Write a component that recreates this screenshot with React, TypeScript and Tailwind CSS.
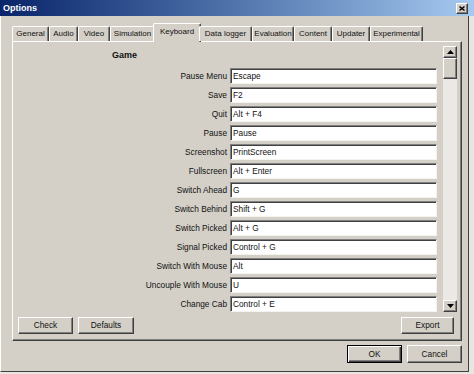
const tabs = [
  { name: "General", w: "w-[37px]" },
  { name: "Audio", w: "w-[29px]" },
  { name: "Video", w: "w-[32px]" },
  { name: "Simulation", w: "w-[45px]" },
  { name: "Keyboard", w: "w-[48px]", active: true },
  { name: "Data logger", w: "w-[53px]" },
  { name: "Evaluation", w: "w-[42px]" },
  { name: "Content", w: "w-[38px]" },
  { name: "Updater", w: "w-[38px]" },
  { name: "Experimental", w: "w-[53px]" },
]

const bindings: [string, string][] = [
  ["Pause Menu", "Escape"],
  ["Save", "F2"],
  ["Quit", "Alt + F4"],
  ["Pause", "Pause"],
  ["Screenshot", "PrintScreen"],
  ["Fullscreen", "Alt + Enter"],
  ["Switch Ahead", "G"],
  ["Switch Behind", "Shift + G"],
  ["Switch Picked", "Alt + G"],
  ["Signal Picked", "Control + G"],
  ["Switch With Mouse", "Alt"],
  ["Uncouple With Mouse", "U"],
  ["Change Cab", "Control + E"],
]

const raised =
  "bg-[#d4d0c8] border border-t-white border-l-white border-r-[#404040] border-b-[#404040] shadow-[inset_-1px_-1px_0_#808080]"

function Button({ label, w, isDefault }: { label: string; w: string; isDefault?: boolean }) {
  if (isDefault) {
    return (
      <div
        className={`${w} h-full flex items-center justify-center bg-[#d4d0c8] border border-black shadow-[inset_1px_1px_0_#fff,inset_-1px_-1px_0_#404040,inset_-2px_-2px_0_#808080]`}
      >
        {label}
      </div>
    )
  }
  return <div className={`${w} h-full flex items-center justify-center ${raised}`}>{label}</div>
}

function Arrow({ up }: { up?: boolean }) {
  return (
    <svg width="7" height="4" viewBox="0 0 7 4">
      {up ? <path d="M3.5 0L7 4H0z" fill="#000" /> : <path d="M0 0h7L3.5 4z" fill="#000" />}
    </svg>
  )
}

export default function App() {
  return (
    <div className="w-[474px] h-[374px] bg-[#e8e6e2] overflow-hidden font-['Liberation_Sans',Arial,sans-serif] text-[8.3px] text-[#111] leading-none">
      {/* title bar */}
      <div className="h-[16px] flex items-center justify-between bg-gradient-to-r from-[#0a246a] to-[#a6caf0] pl-[3px] pr-[6px]">
        <span className="text-white font-bold text-[9px]">Options</span>
        <div className={`w-[12px] h-[11px] flex items-center justify-center ${raised}`}>
          <svg width="6" height="5" viewBox="0 0 6 5">
            <path d="M0.5 0.5L5.5 4.5M5.5 0.5L0.5 4.5" stroke="#000" strokeWidth="1.4" />
          </svg>
        </div>
      </div>

      {/* window body */}
      <div className="w-[469px] h-[356px] bg-[#d4d0c8] border-l border-l-white border-r border-r-[#404040] border-b border-b-[#404040] pt-[7px]">
        {/* tabs */}
        <div className="relative z-10 flex items-end h-[18px] ml-[11px] text-[8px]">
          {tabs.map((t) =>
            t.active ? (
              <div
                key={t.name}
                className={`${t.w} h-[19px] -mx-[2px] -mb-[1px] pb-[3px] flex items-center justify-center bg-[#d4d0c8] border-t border-l border-t-white border-l-white border-r border-r-[#404040] rounded-t-[2px] shadow-[inset_-1px_0_0_#808080]`}
              >
                {t.name}
              </div>
            ) : (
              <div
                key={t.name}
                className={`${t.w} h-[15px] flex items-center justify-center bg-[#d4d0c8] border-t border-l border-t-white border-l-white border-r border-r-[#404040] rounded-t-[2px] shadow-[inset_-1px_0_0_#808080]`}
              >
                {t.name}
              </div>
            )
          )}
        </div>

        {/* panel */}
        <div className="ml-[11px] w-[450px] h-[300px] border border-t-white border-l-white border-r-[#404040] border-b-[#404040] shadow-[inset_-1px_-1px_0_#808080] flex flex-col">
          <div className="mt-[4px] flex h-[267px]">
            <div className="w-[430px] flex flex-col">
              <div className="h-[22px] pt-[5px] pl-[99px] font-bold text-[9px]">Game</div>
              <div className="flex flex-col gap-[3px]">
                {bindings.map(([label, key]) => (
                  <div key={label} className="flex items-center h-[16px] gap-[3px]">
                    <div className="w-[214px] text-right">{label}</div>
                    <div className="w-[207px] h-[16px] flex items-center pl-[2px] bg-white border border-t-[#808080] border-l-[#808080] border-r-[#f4f3f0] border-b-[#f4f3f0] shadow-[inset_1px_1px_0_#404040]">
                      {key}
                    </div>
                  </div>
                ))}
              </div>
            </div>
            {/* scrollbar */}
            <div className="w-[14px] h-[266px] flex flex-col bg-[#ebe9e5]">
              <div className={`h-[12px] flex items-center justify-center ${raised}`}>
                <Arrow up />
              </div>
              <div className={`h-[21px] ${raised}`} />
              <div className="flex-1" />
              <div className={`h-[12px] flex items-center justify-center ${raised}`}>
                <Arrow />
              </div>
            </div>
          </div>

          <div className="mt-[4px] h-[17px] flex pl-[5px] pr-[7px]">
            <div className="flex gap-[5px] h-full">
              <Button label="Check" w="w-[55px]" />
              <Button label="Defaults" w="w-[56px]" />
            </div>
            <div className="flex-1" />
            <Button label="Export" w="w-[53px]" />
          </div>
        </div>

        {/* dialog buttons */}
        <div className="mt-[4px] ml-[11px] w-[450px] h-[18px] flex justify-end gap-[5px]">
          <Button label="OK" w="w-[55px]" isDefault />
          <Button label="Cancel" w="w-[55px]" />
        </div>
      </div>
    </div>
  )
}
